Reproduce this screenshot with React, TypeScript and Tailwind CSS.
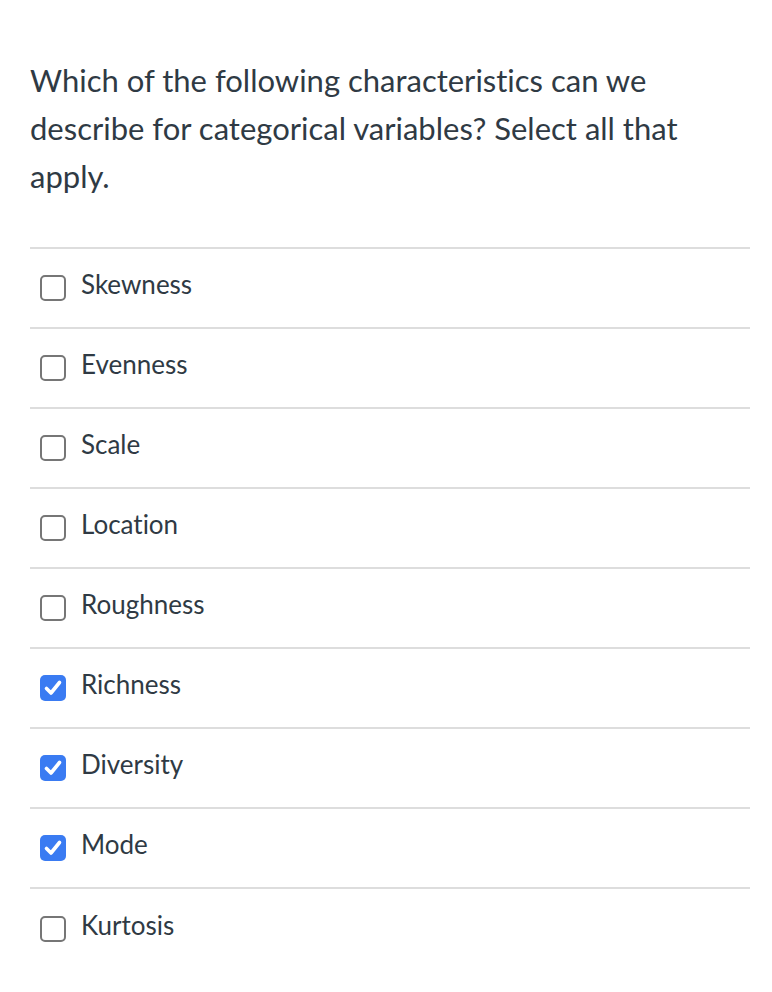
import React from "react";

const options: { label: string; checked: boolean }[] = [
  { label: "Skewness", checked: false },
  { label: "Evenness", checked: false },
  { label: "Scale", checked: false },
  { label: "Location", checked: false },
  { label: "Roughness", checked: false },
  { label: "Richness", checked: true },
  { label: "Diversity", checked: true },
  { label: "Mode", checked: true },
  { label: "Kurtosis", checked: false },
];

function Box({ checked }: { checked: boolean }) {
  if (checked) {
    return (
      <span className="flex h-[26px] w-[26px] shrink-0 items-center justify-center rounded-[5px] bg-[#3a7bf2]">
        <svg width="26" height="26" viewBox="0 0 26 26" fill="none">
          <path d="M6.5 13.5 L11 18 L19.5 7.5" stroke="white" strokeWidth="3.6" strokeLinecap="round" strokeLinejoin="round" />
        </svg>
      </span>
    );
  }
  return <span className="h-[26px] w-[26px] shrink-0 rounded-[5px] border-2 border-[#767676] bg-white" />;
}

export default function App() {
  return (
    <div className="min-h-[992px] bg-white pl-[30px] pr-[22px] pt-[56px] text-[#2f3a44] [font-variant-ligatures:none]" style={{ fontFamily: "Lato, 'Open Sans', sans-serif" }}>
      <p className="text-[31px] leading-[48px]">
        Which of the following characteristics can we describe for categorical variables? Select all that apply.
      </p>
      <div className="mt-[47px] border-t-2 border-[#dddddd]">
        {options.map((o) => (
          <label key={o.label} className="flex h-[80px] items-center gap-[15px] border-b-2 border-[#dddddd] pl-[10px] last:border-b-0">
            <Box checked={o.checked} />
            <span className="pb-[8px] text-[26px] leading-none">{o.label}</span>
          </label>
        ))}
      </div>
    </div>
  );
}
